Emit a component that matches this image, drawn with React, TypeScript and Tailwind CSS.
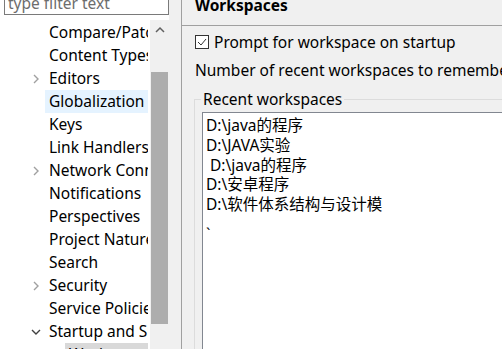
import React from "react";

type Node = {
  label: string;
  arrow?: "right" | "down";
  selected?: boolean;
  child?: boolean;
};

const nodes: Node[] = [
  { label: "Compare/Patch" },
  { label: "Content Types" },
  { label: "Editors", arrow: "right" },
  { label: "Globalization", selected: true },
  { label: "Keys" },
  { label: "Link Handlers" },
  { label: "Network Connections", arrow: "right" },
  { label: "Notifications" },
  { label: "Perspectives" },
  { label: "Project Natures" },
  { label: "Search" },
  { label: "Security", arrow: "right" },
  { label: "Service Policies" },
  { label: "Startup and Shutdown", arrow: "down" },
  { label: "Workspaces", child: true },
];

const recent = [
  "D:\\java的程序",
  "D:\\JAVA实验",
  " D:\\java的程序",
  "D:\\安卓程序",
  "D:\\软件体系结构与设计模",
];

const font = "font-['Noto_Sans','Noto_Sans_CJK_SC',sans-serif]";

const Chevron = ({ dir }: { dir: "right" | "down" }) => (
  <svg width="10" height="10" viewBox="0 0 10 10" fill="none">
    {dir === "right" ? (
      <path d="M3 1l4 4-4 4" stroke="#a0a0a0" strokeWidth="1.4" />
    ) : (
      <path d="M1 3l4 4 4-4" stroke="#404040" strokeWidth="1.4" />
    )}
  </svg>
);

export default function App() {
  return (
    <div
      className={`w-[502px] h-[349px] overflow-hidden flex bg-[#f0f0f0] text-black text-[15.5px] ${font}`}
    >
      {/* Left: filter + tree */}
      <div className="w-[169px] shrink-0 bg-white flex flex-col">
        <div className="ml-[4px] mt-[-8px] h-[23px] border border-[#7a7a7a] bg-white px-[3px] leading-[21px] text-[#6d6d6d] whitespace-nowrap overflow-hidden">
          type filter text
        </div>
        <div className="mt-[5px] flex flex-1 min-h-0">
          <div className="w-[150px] shrink-0 flex flex-col pt-[1px]">
            {nodes.map((n) => (
              <div key={n.label} className="h-[23px] shrink-0 flex items-center">
                <div className="w-[31px] shrink-0" />
                <div className="w-[14px] shrink-0 flex items-center justify-start">
                  {n.arrow && <Chevron dir={n.arrow} />}
                </div>
                {n.child && <div className="w-[20px] shrink-0" />}
                <div
                  className={`flex-1 h-full flex items-center pl-[4px] whitespace-nowrap overflow-hidden ${
                    n.selected ? "bg-[#e5f3ff]" : n.child ? "bg-[#d9d9d9]" : ""
                  }`}
                >
                  {n.label}
                </div>
                <div className="w-[2px] shrink-0" />
              </div>
            ))}
          </div>
          {/* scrollbar */}
          <div className="w-[19px] shrink-0 bg-[#f0f0f0] flex flex-col">
            <div className="h-[20px] flex items-center justify-center">
              <svg width="10" height="8" viewBox="0 0 10 8" fill="none">
                <path d="M1 6l4-4 4 4" stroke="#606060" strokeWidth="1.5" />
              </svg>
            </div>
            <div className="h-[32px]" />
            <div className="mx-[1px] h-[252px] bg-[#adadad]" />
          </div>
        </div>
      </div>

      <div className="w-[12px] shrink-0" />
      <div className="w-px shrink-0 bg-[#a0a0a0]" />

      {/* Right: preference page */}
      <div className="flex-1 min-w-0 flex flex-col">
        <div className="h-[25px] shrink-0 pl-[13px] mt-[-7px] font-bold leading-[25px] whitespace-nowrap">
          Workspaces
        </div>
        <div className="h-px shrink-0 bg-[#a0a0a0] mt-[7px]" />
        <div className="pl-[13px] mt-[9px] flex items-center gap-[5px] h-[14px]">
          <div className="w-[14px] h-[14px] border border-[#333] bg-white flex items-center justify-center">
            <svg width="12" height="12" viewBox="0 0 12 12" fill="none">
              <path d="M2 6l3 3 5-6" stroke="#333" strokeWidth="1" />
            </svg>
          </div>
          <span className="whitespace-nowrap leading-[14px]">
            Prompt for workspace on startup
          </span>
        </div>
        <div className="pl-[13px] mt-[11px] whitespace-nowrap leading-[20px]">
          Number of recent workspaces to remember:
        </div>
        {/* group box */}
        <div className="ml-[12px] mt-[19px] flex-1 relative border-l border-t border-[#dcdcdc]">
          <div className="absolute left-[6px] top-[-11px] px-[2px] bg-[#f0f0f0] leading-[20px] whitespace-nowrap">
            Recent workspaces
          </div>
          <div className="ml-[7px] mt-[12px] h-full bg-white border-l border-t border-[#828790] pl-[3px] pt-[3px]">
            {recent.map((r, i) => (
              <div key={i} className="h-[19.75px] leading-[19.75px] whitespace-pre">
                {r}
              </div>
            ))}
            <div className="h-[24px] leading-[24px] mt-[7px]">`</div>
          </div>
        </div>
      </div>
    </div>
  );
}
